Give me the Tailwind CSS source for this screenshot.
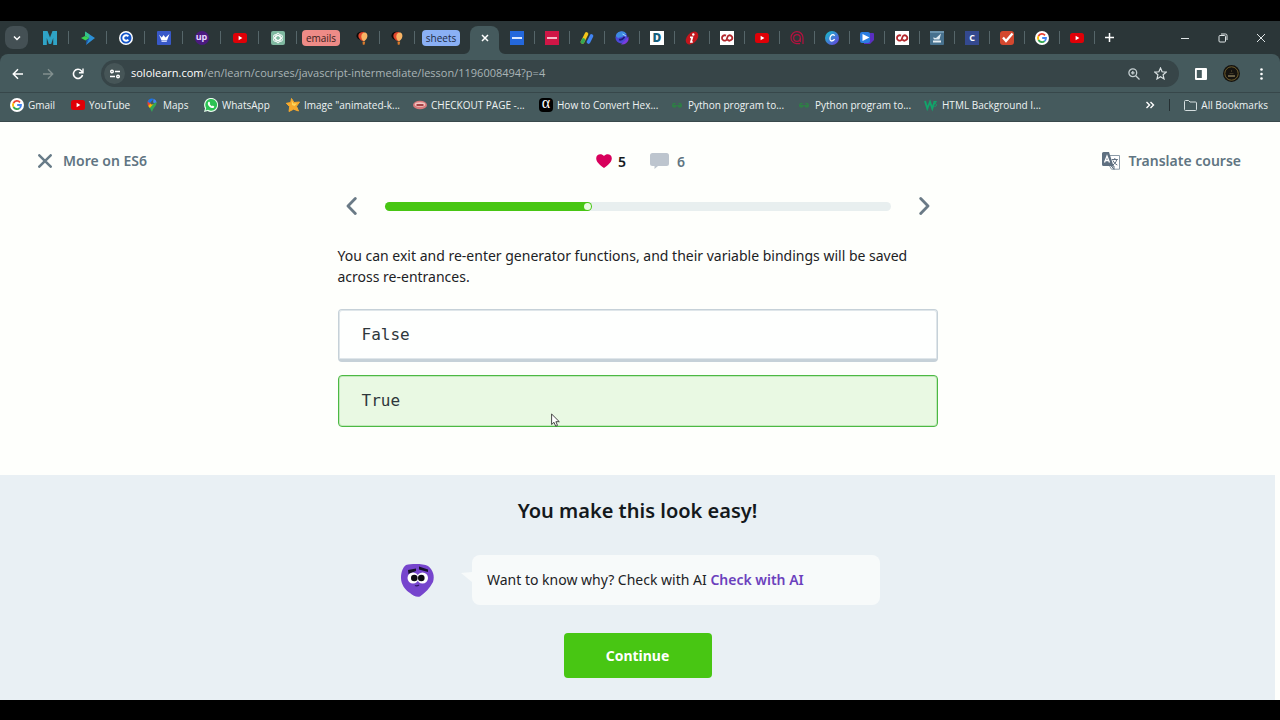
<!DOCTYPE html>
<html lang="en">
<head>
  <meta charset="UTF-8" />
  <meta name="viewport" content="width=device-width, initial-scale=1.0"/>
  <title>More on ES6</title>
  <script src="https://cdn.jsdelivr.net/npm/@tailwindcss/browser@4"></script>
</head>
<body class="bg-black min-h-screen pt-[21px] pb-5 flex flex-col font-['Open_Sans',sans-serif]">

  <!-- Shared icons -->
  <svg class="hidden">
    <symbol id="youtube" viewBox="0 0 14 14">
      <rect y="2" width="14" height="10" rx="2.5" fill="#e00007"/>
      <path d="M5.6 4.8v4.4L9.4 7z" fill="#fff"/>
    </symbol>
    <symbol id="google" viewBox="0 0 14 14">
      <circle cx="7" cy="7" r="7" fill="#fff"/>
      <path d="M10 4.3A4 4 0 0 0 3.5 5" fill="none" stroke="#ea4335" stroke-width="1.8"/>
      <path d="M3.5 5a4 4 0 0 0 0 4" fill="none" stroke="#fbbc05" stroke-width="1.8"/>
      <path d="M3.5 9A4 4 0 0 0 9.6 10.1" fill="none" stroke="#34a853" stroke-width="1.8"/>
      <path d="M9.6 10.1A4 4 0 0 0 11 7H7.2" fill="none" stroke="#4285f4" stroke-width="1.8"/>
    </symbol>
    <symbol id="balloon" viewBox="0 0 14 14">
      <path d="M1.500 5.500C1 2.500 4 .3 8 .8L5.500 9C3.500 8.500 2 7.500 1.500 5.500z" fill="#0c0909"/>
      <path d="M3.300 5C3.300 2.300 6 .6 9.500 1.200L8.500 10.500C5.500 9.500 3.500 7.500 3.300 5z" fill="#e0452c"/>
      <path d="M6.300 5.500C6.300 3 8.500 1.200 10.800 1.700 13 3 12.800 6.500 11 8.500L9 10.500C7.300 9.500 6.300 7.500 6.300 5.500z" fill="#f8b465"/>
      <path d="M7.500 10.800h2.700L9.500 13.800H7.800z" fill="#d97a2b"/>
    </symbol>
    <symbol id="loops" viewBox="0 0 14 14">
      <rect width="14" height="14" fill="#fff"/>
      <path d="M6 4.600A2.700 2.700 0 1 0 6 9.300C7.300 8.500 7 5.500 8.300 4.700a2.600 2.600 0 1 1-.8 3.800" fill="none" stroke="#b3262b" stroke-width="1.800"/>
    </symbol>
    <symbol id="geeks" viewBox="0 0 14 14">
      <path d="M5.500 6A1.700 1.700 0 1 0 6 7.800H2M8.500 6A1.700 1.700 0 1 1 8 7.800h4" fill="none" stroke="#2f7d46" stroke-width="1.500"/>
    </symbol>
  </svg>

  <!-- Tab strip -->
  <div class="h-[33px] bg-[#2b3638] flex items-center text-white">
    <button aria-label="Search tabs" class="ml-[5px] mr-[3px] w-[23px] h-[23px] rounded-lg bg-[#445054] flex items-center justify-center">
      <svg class="w-2 h-2" viewBox="0 0 8 8" fill="none" stroke="#fff" stroke-width="1.500"><path d="M1 2.500 4 5.500 7 2.500"/></svg>
    </button>

    <!-- Pinned tabs -->
    <div class="flex items-center *:w-[38px] *:h-[13px] *:border-r *:border-[#56666a] *:flex *:items-center *:justify-center">
      <div><svg class="w-3.5 h-3.5 shrink-0" viewBox="0 0 14 14"><path d="M0 0h4.500L7 6.500 9.500 0H14v14h-3.800V7L8.200 13H5.800L3.800 7v7H0z" fill="#2fa3c6"/></svg></div>
      <div><svg class="w-3.5 h-3.5 shrink-0" viewBox="0 0 14 14"><path d="M4 .5 14 7 5 14 8 7z" fill="#2c8fd6"/><path d="M4 .5 8.500 3.500 8 7 4 5z" fill="#36c08c"/><path d="M0 7 4 5 8.500 7 4.500 9.500z" fill="#39d353"/><path d="M5 14 5.500 9 8.500 7z" fill="#1d5db5"/></svg></div>
      <div><svg class="w-3.5 h-3.5 shrink-0" viewBox="0 0 14 14"><circle cx="7" cy="7" r="7" fill="#fff"/><circle cx="7" cy="7" r="5.500" fill="#1556c8"/><path d="M9.300 5.300A2.800 2.800 0 1 0 9.300 8.700" fill="none" stroke="#fff" stroke-width="2"/></svg></div>
      <div><svg class="w-3.5 h-3.5 shrink-0" viewBox="0 0 14 14"><rect width="14" height="14" rx="1" fill="#3858c8"/><path d="M2 3.500 4.800 6.500 6.500 4 8.500 6.500 12.500 3 10 9.500H4.500z" fill="#fff"/><path d="M4.500 10.500h5.300" stroke="#c8d4ff"/></svg></div>
      <div><span class="w-3.5 h-3.5 shrink-0 rounded-full bg-[#4b1a80] text-[9px] leading-3 font-bold text-center text-[#e6d6ff]">up</span></div>
      <div><svg class="w-3.5 h-3.5 shrink-0"><use href="#youtube"/></svg></div>
      <div><svg class="w-3.5 h-3.5 shrink-0" viewBox="0 0 14 14"><rect width="14" height="14" rx="2" fill="#7fb8a0"/><g fill="none" stroke="#fff" stroke-width=".9"><ellipse cx="7" cy="7" rx="2.300" ry="4.800"/><ellipse cx="7" cy="7" rx="2.300" ry="4.800" transform="rotate(60 7 7)"/><ellipse cx="7" cy="7" rx="2.300" ry="4.800" transform="rotate(120 7 7)"/></g></svg></div>
    </div>

    <button class="ml-[5px] w-[38px] h-4 rounded bg-[#ee8b87] text-[#3a2020] text-[10px] leading-4">emails</button>
    <div class="ml-[5px] flex items-center *:w-[35px] *:h-[13px] *:border-r *:border-[#56666a] *:flex *:items-center *:justify-center">
      <div><svg class="w-3.5 h-3.5 shrink-0"><use href="#balloon"/></svg></div>
      <div><svg class="w-3.5 h-3.5 shrink-0"><use href="#balloon"/></svg></div>
    </div>
    <button class="ml-[7px] w-[38px] h-4 rounded bg-[#8ab0f5] text-[#1c2a44] text-[10px] leading-4">sheets</button>

    <!-- Active tab -->
    <div class="self-end ml-1 h-7 flex items-end">
      <svg class="w-1.5 h-1.5" viewBox="0 0 6 6"><path d="M6 0A6 6 0 0 1 0 6H6z" fill="#455a5d"/></svg>
      <button aria-label="Close tab" class="w-[29px] h-7 rounded-t-lg bg-[#455a5d] flex items-center justify-center pb-1">
        <svg class="w-2 h-2" viewBox="0 0 8 8" stroke="#fff" stroke-width="1.500"><path d="M1 1 7 7M7 1 1 7"/></svg>
      </button>
      <svg class="w-1.5 h-1.5" viewBox="0 0 6 6"><path d="M0 0A6 6 0 0 0 6 6H0z" fill="#455a5d"/></svg>
    </div>

    <div class="-ml-[5px] flex items-center *:w-[35px] *:h-[13px] *:border-r *:border-[#56666a] *:flex *:items-center *:justify-center">
      <div><svg class="w-3.5 h-3.5 shrink-0" viewBox="0 0 14 14"><rect width="14" height="14" fill="#2468dc"/><path d="M2 7h10" stroke="#dbe8ff" stroke-width="2"/></svg></div>
      <div><svg class="w-3.5 h-3.5 shrink-0" viewBox="0 0 14 14"><rect width="14" height="14" fill="#d01646"/><path d="M2 7h10" stroke="#f8b9c8" stroke-width="2"/></svg></div>
      <div><svg class="w-3.5 h-3.5 shrink-0" viewBox="0 0 14 14" stroke-linecap="round" stroke-width="3.600"><path d="M2.500 11 6.500 3" stroke="#f5c518"/><path d="M2.500 11 3.500 9" stroke="#34a853"/><path d="M8.500 11 11.500 5" stroke="#4285f4"/></svg></div>
      <div><svg class="w-3.5 h-3.5 shrink-0" viewBox="0 0 14 14"><circle cx="6.500" cy="6.500" r="6" fill="#4b48d8"/><path d="M.8 5a6 6 0 0 1 10.500-2.500L8 5.500 3 7z" fill="#3d8be0"/><path d="M6 13.500 13.500 5.500V9c-1 3-4 5-7.500 4.500z" fill="#7a3ce0"/><path d="M4 8.500Q7 9.500 9.500 6" fill="none" stroke="#1c1c78" stroke-width="1.800"/><path d="M7.500 3 11 5" stroke="#9fe0ff"/></svg></div>
      <div><span class="w-3.5 h-3.5 shrink-0 bg-white text-[#17607c] text-[12px] leading-[14px] font-extrabold text-center">D</span></div>
      <div><svg class="w-3.5 h-3.5 shrink-0" viewBox="0 0 14 14"><ellipse cx="7" cy="7" rx="7.500" ry="5" transform="rotate(-48 7 7)" fill="#c4151c"/><path d="M5 6.300h2.300L6 11h1.800" fill="none" stroke="#fff" stroke-width="1.700"/><circle cx="8.300" cy="3.500" r="1.200" fill="#fff"/></svg></div>
      <div><svg class="w-3.5 h-3.5 shrink-0"><use href="#loops"/></svg></div>
      <div><svg class="w-3.5 h-3.5 shrink-0"><use href="#youtube"/></svg></div>
      <div><svg class="w-3.5 h-3.5 shrink-0" viewBox="0 0 14 14" fill="none" stroke="#b5123f" stroke-width="1.200"><path d="M13 13V6.700A6 6 0 1 0 6.500 12.700H10"/><circle cx="7" cy="7" r="3.300"/><path d="M10.300 7V11"/></svg></div>
      <div><svg class="w-3.5 h-3.5 shrink-0" viewBox="0 0 14 14"><defs><linearGradient id="cv" x1="0" y1="0" x2="1" y2="1"><stop stop-color="#12c4c8"/><stop offset="1" stop-color="#6a3be0"/></linearGradient></defs><circle cx="7" cy="7" r="7" fill="url(#cv)"/><path d="M9.300 5C9.500 3.500 7.500 3 6 4.700 4.500 6.500 4.500 10 6.700 10 8 10 9 9.200 9.600 8.200" fill="none" stroke="#fff" stroke-width="1.300"/></svg></div>
      <div><svg class="w-3.5 h-3.5 shrink-0" viewBox="0 0 14 14"><path d="M4 2h9a1 1 0 0 1 1 1v6l-4 4H4z" fill="#5a2fc2"/><rect y="1" width="10" height="11" rx="2" fill="#2b7de0"/><path d="M2.500 3 9.500 6.500 2.500 10z" fill="#fff"/></svg></div>
      <div><svg class="w-3.5 h-3.5 shrink-0"><use href="#loops"/></svg></div>
      <div><svg class="w-3.5 h-3.5 shrink-0" viewBox="0 0 14 14"><rect width="14" height="14" rx="1" fill="#47718e"/><path d="M3 9.500h8v2H3z" fill="#e7eef3"/><path d="M3 6.500 6 7 11 2.500 9.500 8.500H4z" fill="#dce8ef"/><path d="M0 0h14v2H0z" fill="#6b93ad"/></svg></div>
      <div><span class="w-3.5 h-3.5 shrink-0 bg-[#34498f] text-white text-[9px] leading-[14px] font-bold text-center">C</span></div>
      <div><svg class="w-3.5 h-3.5 shrink-0" viewBox="0 0 14 14"><rect width="14" height="14" rx="3" fill="#d4482f"/><path d="M3 6.500 6 10 12.500 2.500" fill="none" stroke="#fff" stroke-width="2.300"/></svg></div>
      <div><svg class="w-3.5 h-3.5 shrink-0"><use href="#google"/></svg></div>
      <div><svg class="w-3.5 h-3.5 shrink-0"><use href="#youtube"/></svg></div>
    </div>
    <button aria-label="New tab" class="w-[29px] h-6 flex items-center justify-center">
      <svg class="w-[9px] h-[9px]" viewBox="0 0 9 9" stroke="#fff" stroke-width="1.500"><path d="M4.500 0v9M0 4.500h9"/></svg>
    </button>

    <!-- Window controls -->
    <div class="ml-auto flex *:w-[38px] *:h-6 *:flex *:items-center *:justify-center">
      <button aria-label="Minimize"><svg class="w-2.5 h-2.5" viewBox="0 0 10 10" stroke="#dfe5e6"><path d="M1 5.500h8"/></svg></button>
      <button aria-label="Restore"><svg class="w-2.5 h-2.5" viewBox="0 0 10 10" fill="none" stroke="#dfe5e6"><rect x="1" y="2.500" width="6.500" height="6.500" rx="1"/><path d="M3 1h4.500A1.500 1.500 0 0 1 9 2.500V7"/></svg></button>
      <button aria-label="Close"><svg class="w-2.5 h-2.5" viewBox="0 0 10 10" stroke="#dfe5e6"><path d="M1 1 9 9M9 1 1 9"/></svg></button>
    </div>
  </div>

  <!-- Toolbar -->
  <div class="bg-[#2b3638]">
    <div class="h-[39px] pt-px rounded-t-lg bg-[#455a5d] border-b border-[#37474a] flex items-center">
      <div class="flex *:w-[30px] *:h-6 *:flex *:items-center *:justify-center pl-[3px]">
        <button aria-label="Back"><svg class="w-3 h-3" viewBox="0 0 12 12" fill="none" stroke="#fff" stroke-width="1.500"><path d="M11 6H1.500M6 1.300 1.300 6 6 10.700"/></svg></button>
        <button aria-label="Forward"><svg class="w-3 h-3" viewBox="0 0 12 12" fill="none" stroke="#82908f" stroke-width="1.400"><path d="M1 6h9.500M6 1.300 10.700 6 6 10.700"/></svg></button>
        <button aria-label="Reload"><svg class="w-3 h-3" viewBox="0 0 12 12" fill="none" stroke="#fff" stroke-width="1.600"><path d="M10.500 7A4.600 4.600 0 1 1 9.500 2.900L10.600 4"/><path d="M11 .5v4.200H6.900" stroke-width="1.400"/></svg></button>
      </div>
      <div class="ml-2 flex-1 h-[27px] rounded-full bg-[#374548] flex items-center pl-[3px] pr-3 text-[11px]">
        <button aria-label="Site information" class="w-[21px] h-[21px] rounded-full bg-[#465557] flex items-center justify-center">
          <svg class="w-2.5 h-2.5" viewBox="0 0 10 10" fill="none" stroke="#fff" stroke-width="1.400"><circle cx="2" cy="2.500" r="1.300"/><path d="M5 2.500h5M0 7.500h5"/><circle cx="8" cy="7.500" r="1.300"/></svg>
        </button>
        <label for="url" class="ml-1.5 text-white">sololearn.com</label>
        <input id="url" type="text" value="/en/learn/courses/javascript-intermediate/lesson/1196008494?p=4" class="flex-1 min-w-0 bg-transparent text-[#a9b4b6] outline-none"/>
        <button aria-label="Zoom" class="mr-3.5"><svg class="w-3 h-3" viewBox="0 0 12 12" fill="none" stroke="#c5cfd1" stroke-width="1.300"><circle cx="4.800" cy="4.800" r="3.900"/><path d="M7.700 7.700 11.500 11.500M4.800 3v3.600M3 4.800h3.600"/></svg></button>
        <button aria-label="Bookmark this tab"><svg class="w-[13px] h-[13px]" viewBox="0 0 13 13" fill="none" stroke="#dbe3e4" stroke-width="1.200"><path d="M6.500 1 8.100 4.800 12.200 5.100 9.100 7.800 10 11.900 6.500 9.700 3 11.900 3.900 7.800.8 5.100 4.900 4.800z"/></svg></button>
      </div>
      <button aria-label="Side panel" class="ml-4"><svg class="w-3 h-3" viewBox="0 0 12 12"><rect width="12" height="12" rx="1" fill="#fff"/><path d="M1.800 2h5v8h-5z" fill="#455a5d"/></svg></button>
      <button aria-label="Profile" class="ml-4"><svg class="w-[17px] h-[17px]" viewBox="0 0 17 17"><circle cx="8.500" cy="8.500" r="8.500" fill="#15130f"/><circle cx="8.500" cy="8.500" r="6.700" fill="none" stroke="#6d5c2c"/><path d="M5 11h7" stroke="#b9a878"/><path d="M6.500 8.500h4M8.500 5v2" stroke="#3d3524"/></svg></button>
      <button aria-label="Menu" class="ml-4 mr-[13px]"><svg class="w-[11px] h-3" viewBox="0 0 11 12" fill="#fff"><circle cx="5.500" cy="1.500" r="1.300"/><circle cx="5.500" cy="6" r="1.300"/><circle cx="5.500" cy="10.500" r="1.300"/></svg></button>
    </div>
  </div>

  <!-- Bookmarks bar -->
  <div class="h-[29px] bg-[#455a5d] border-b border-[#39494c] flex items-center pl-2.5 pr-3 pb-1 text-[10px] text-[#eef3f3]">
    <div class="flex *:flex *:items-center *:gap-1 *:whitespace-nowrap">
      <a href="#" class="w-[61px]"><svg class="w-3.5 h-3.5 shrink-0"><use href="#google"/></svg>Gmail</a>
      <a href="#" class="w-[74px]"><svg class="w-3.5 h-3.5 shrink-0"><use href="#youtube"/></svg>YouTube</a>
      <a href="#" class="w-[59px]"><svg class="w-3.5 h-3.5 shrink-0" viewBox="0 0 14 14"><path d="M2.500 5A4.500 4.500 0 0 1 4 1.500L7 5 3.500 8.500C2.900 7.500 2.500 6.500 2.500 5z" fill="#ea4335"/><path d="M4 1.500A4.500 4.500 0 0 1 8.500.7L5 5.200 2.700 3.500z" fill="#1a73e8"/><path d="M8.500.7A4.500 4.500 0 0 1 11.500 5L8 5z" fill="#4285f4"/><path d="M3.500 8.500 11.400 4C12 8 8 9.500 7.300 13.500H6.500C6.200 11.500 5 10.500 3.500 8.500z" fill="#34a853"/><path d="M3.300 8 5.500 5.500 8.500 6 4.800 10z" fill="#fbbc04"/><circle cx="7" cy="5" r="1.600" fill="#455a5d"/></svg>Maps</a>
      <a href="#" class="w-[82px]"><svg class="w-3.5 h-3.5 shrink-0" viewBox="0 0 14 14"><path d="M0 14 1 10.400A7 7 0 1 1 3.600 13z" fill="#e9fbee"/><path d="M1.500 12.500 2.200 10A5.900 5.900 0 1 1 4 11.800z" fill="#2bc253"/><path d="M4.600 3.800 5.500 3.700 6.200 5.300 5.700 6.100C6.200 7.200 7 7.900 8 8.300L8.700 7.600 10.300 8.400C10.200 9.800 9 10.300 7.800 10 5.800 9.400 4.400 7.900 3.900 6.200 3.700 5.200 4 4.300 4.600 3.800z" fill="#fff"/></svg>WhatsApp</a>
      <a href="#" class="w-[127px]"><svg class="w-3.5 h-3.5 shrink-0" viewBox="0 0 14 14"><path d="M5.500.5 8 4.500 13.500 4 10.500 8.300 12.500 13 7.500 11.200 3 13.500 3.700 8.600.3 5.300 4.700 4.600z" fill="#f7a92c" stroke="#f7a92c" stroke-linejoin="round"/><path d="M5.800 2.500 7.300 5.500 11 5.500 8.500 8 6 7z" fill="#ffd75a"/></svg>Image "animated-k...</a>
      <a href="#" class="w-[126px]"><svg class="w-3.5 h-3.5 shrink-0" viewBox="0 0 14 14"><ellipse cx="7" cy="7" rx="7" ry="4.300" fill="#d9797b"/><ellipse cx="7" cy="6.500" rx="5.200" ry="2.300" fill="#f4c4c0"/><path d="M3.500 7h7" stroke="#8e2226" stroke-width="1.600"/></svg>CHECKOUT PAGE -...</a>
      <a href="#" class="w-[131px]"><span class="w-3.5 h-3.5 shrink-0 rounded-sm bg-black text-white text-[16px] leading-[10px] text-center font-['Liberation_Serif',serif]">α</span>How to Convert Hex...</a>
      <a href="#" class="w-[127px]"><svg class="w-3.5 h-3.5 shrink-0"><use href="#geeks"/></svg>Python program to...</a>
      <a href="#" class="w-[127px]"><svg class="w-3.5 h-3.5 shrink-0"><use href="#geeks"/></svg>Python program to...</a>
      <a href="#" class="w-[120px]"><svg class="w-3.5 h-3.5 shrink-0" viewBox="0 0 14 14" fill="none" stroke="#12a46a" stroke-width="1.900"><path d="M1 3 3.300 10.500 6 4 8.300 10.500 10.500 4"/><path d="M9.500 3.500h3L11 5.500c2 0 2 3-.5 3" stroke-width="1"/></svg>HTML Background I...</a>
    </div>
    <button aria-label="More bookmarks" class="ml-auto"><svg class="w-2.5 h-2" viewBox="0 0 10 8" fill="none" stroke="#fff" stroke-width="1.400"><path d="M1.500 1 4.500 4 1.500 7M5.500 1 8.500 4 5.500 7"/></svg></button>
    <div class="ml-3.5 mr-3.5 w-px h-3 bg-[#253033]"></div>
    <a href="#" class="flex items-center gap-1"><svg class="w-[13px] h-[11px]" viewBox="0 0 13 11" fill="none" stroke="#d5dedf"><path d="M.5 1.500a1 1 0 0 1 1-1h3L6 2h5.500a1 1 0 0 1 1 1v6.500a1 1 0 0 1-1 1h-10a1 1 0 0 1-1-1z"/></svg>All Bookmarks</a>
  </div>

  <!-- Lesson page -->
  <div class="relative flex-1 bg-[#fefffc] pr-[5px] flex flex-col text-[14px] text-[#1c2225] font-['Noto_Sans',sans-serif]">
    <header class="grid grid-cols-3 items-center pt-7 pl-[38px] pr-[34px] h-[50px] font-semibold text-[#607582]">
      <a href="#" class="flex items-center gap-[11px] leading-5">
        <svg class="w-3.5 h-3.5" viewBox="0 0 14 14" stroke="#687c88" stroke-width="2.500" stroke-linecap="round"><path d="M1.300 1.300 12.700 12.700M12.700 1.300 1.300 12.700"/></svg>
        More on ES6
      </a>
      <div class="pl-0.5 flex items-center justify-center">
        <svg class="w-4 h-4" viewBox="0 0 16 16"><path d="M8 15C3 11.500.2 8.800.2 5.300.2 1 5.500 0 8 3 10.500 0 15.800 1 15.800 5.300 15.800 8.800 13 11.500 8 15z" fill="#d8005c"/></svg>
        <span class="ml-1.5 text-[#14191c]">5</span>
        <button aria-label="Comments" class="ml-6"><svg class="block w-[19px] h-4" viewBox="0 0 19 16"><path d="M2.500 0h14A2.500 2.500 0 0 1 19 2.500v8a2.500 2.500 0 0 1-2.500 2.500H8l-3.500 3V13h-2A2.500 2.500 0 0 1 0 10.500v-8A2.500 2.500 0 0 1 2.500 0z" fill="#bdc5ce"/></svg></button>
        <span class="ml-2">6</span>
      </div>
      <button class="justify-self-end flex items-center gap-2 leading-5">
        <svg class="w-[18px] h-[18px]" viewBox="0 0 18 18"><path d="M7 3.500h10.500v13.700H9.500L7 13" fill="#fff" stroke="#8b9ba7"/><path d="M0 1.500A1.500 1.500 0 0 1 1.500 0H7l4.500 14H1.500A1.500 1.500 0 0 1 0 12.500z" fill="#5f7080"/><path d="M2.500 10.500 5 4l2.500 6.500M3.300 8.500h3.500" fill="none" stroke="#fff" stroke-width="1.300"/><path d="M9.800 7.500h6M12.800 6v1.500M14.800 7.500C14 10.500 12.500 12 10.800 13M11 8.500c1 2.200 2.300 3.500 4.300 4.500M9.300 14 12 17.300 12 14z" fill="none" stroke="#5f7080"/></svg>
        Translate course
      </button>
    </header>

    <main class="mx-auto w-full max-w-[600px] mt-6">
      <div class="flex items-center px-2">
        <button aria-label="Previous"><svg class="block w-[11px] h-5" viewBox="0 0 11 20" fill="none" stroke="#6a7a86" stroke-width="2.800" stroke-linecap="round" stroke-linejoin="round"><path d="M9.300 2.500 2 10 9.300 17.500"/></svg></button>
        <div role="progressbar" aria-label="Lesson progress" aria-valuenow="41" class="mx-7 flex-1 h-[9px] rounded-full bg-[#e8efef]">
          <div class="h-full rounded-full bg-[#48c613] flex items-center justify-end pr-px" style="width:41%">
            <span class="w-[7px] h-[7px] rounded-full bg-[#eafbe2]"></span>
          </div>
        </div>
        <button aria-label="Next"><svg class="block w-[11px] h-5" viewBox="0 0 11 20" fill="none" stroke="#6a7a86" stroke-width="2.800" stroke-linecap="round" stroke-linejoin="round"><path d="M1.700 2.500 9 10 1.700 17.500"/></svg></button>
      </div>

      <p class="mt-[29px] leading-[21px]">You can exit and re-enter generator functions, and their variable bindings will be saved across re-entrances.</p>

      <div class="mt-[22px] flex flex-col gap-[13px] text-[16px] leading-6 font-['DejaVu_Sans_Mono',monospace] text-[#2e373b]">
        <label class="h-[53px] px-[23px] pt-[13px] rounded border border-b-3 border-[#c6d1d8] bg-[#fefffe] shadow-[inset_0_0_0_1px_#dfe6ea]">
          <input type="radio" name="answer" class="sr-only"/>False
        </label>
        <label class="h-[52px] px-[23px] pt-[13px] rounded border border-[#4cb944] bg-[#e9f9e3] shadow-[inset_0_0_0_1px_#c3e9bb]">
          <input type="radio" name="answer" checked class="sr-only"/>True
        </label>
      </div>
    </main>

    <!-- Result -->
    <section class="mt-12 flex-1 bg-[#e9f0f4] flex flex-col items-center pt-[21px] pb-[22px]">
      <h2 class="text-[20px] leading-[30px] font-semibold text-[#14191c]">You make this look easy!</h2>
      <div class="mt-[29px] pl-0.5 flex items-center">
        <svg class="w-10 h-10" viewBox="0 0 40 40">
          <path d="M9 5C15 3.500 26 3.500 31 6 36 10 38 16 36 22 33 28 28 33 23 36.500 20 37.500 16 36 13 33 8 30 4 24 4 18 4 12 6 7 9 5z" fill="#7645cd"/>
          <path d="M11 10 19 8.500V11L11.500 14zM22 6.500 31 9.500V12L22 9.500z" fill="#17122b"/>
          <circle cx="16" cy="18" r="5.500" fill="#fff"/><circle cx="25.500" cy="18" r="5.500" fill="#fff"/>
          <circle cx="17.300" cy="18" r="3.300" fill="#0c0b12"/><circle cx="24.300" cy="18" r="3.300" fill="#0c0b12"/>
          <path d="M18 25.500Q20 26.500 22 25" fill="none" stroke="#2d1763" stroke-width="1.300"/>
        </svg>
        <svg class="ml-6 mb-1.5 w-[11px] h-2.5" viewBox="0 0 11 10"><path d="M0 1 11 0v10z" fill="#f7fafa"/></svg>
        <div class="w-[408px] h-[50px] rounded-lg bg-[#f7fafa] px-[15px] pb-0.5 flex items-center">
          <p>Want to know why? Check with AI <a href="#" class="font-semibold text-[#6b41bd]">Check with AI</a></p>
        </div>
      </div>
      <button class="mt-7 w-[148px] h-[45px] rounded bg-[#48c613] text-white font-bold">Continue</button>
    </section>

    <!-- Mouse pointer -->
    <svg class="absolute left-[551px] top-[291px] w-[9px] h-3.5" viewBox="0 0 9 14"><path d="M.6 1v10.500L3 9.300 4.700 13.200 6.500 12.400 4.900 8.700H8.300z" fill="#fff" stroke="#333" stroke-width=".9"/></svg>
  </div>

</body>
</html>
